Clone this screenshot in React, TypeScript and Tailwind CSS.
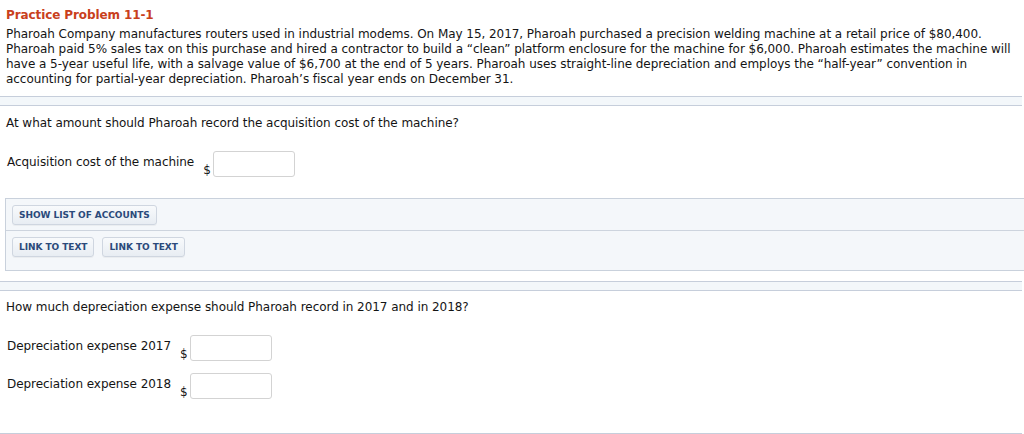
import React from "react";

function Btn({ children }: { children: React.ReactNode }) {
  return (
    <button className="h-[20px] px-[6px] rounded-[3px] border border-[#cfd6e0] bg-gradient-to-b from-[#f8fafc] to-[#e8edf3] text-[9px] font-bold text-[#2b4a7b] leading-[18px] shadow-[0_1px_0_rgba(0,0,0,0.04)]">
      {children}
    </button>
  );
}

function Row({ label, className = "" }: { label: string; className?: string }) {
  return (
    <div className={`flex items-start pl-[7px] ${className}`}>
      <span className="pt-[4px] pr-[9px] leading-[15px]">{label}</span>
      <span className="pt-[12px] leading-[15px] pr-[2px]">$</span>
      <div className="w-[82px] h-[26px] rounded-[3px] border border-[#d3d3d3] bg-white" />
    </div>
  );
}

function Band({ className = "" }: { className?: string }) {
  return <div className={`h-[10px] mr-[2px] border-y border-[#c6cedb] bg-[#f3f7fa] ${className}`} />;
}

export default function App() {
  return (
    <div className="w-[1024px] h-[434px] overflow-hidden bg-white text-[12px] tracking-[-0.05px] text-[#141414] font-['DejaVu_Sans','Verdana',sans-serif]">
      <div className="pl-[6px] pt-[7px]">
        <h1 className="text-[12px] leading-[16px] font-bold tracking-[-0.1px] text-[#c9401c]">Practice Problem 11-1</h1>
        <p className="mt-[4px] leading-[15px] whitespace-nowrap">
          Pharoah Company manufactures routers used in industrial modems. On May 15, 2017, Pharoah purchased a precision welding machine at a retail price of $80,400.
          <br />
          Pharoah paid 5% sales tax on this purchase and hired a contractor to build a “clean” platform enclosure for the machine for $6,000. Pharoah estimates the machine will
          <br />
          have a 5-year useful life, with a salvage value of $6,700 at the end of 5 years. Pharoah uses straight-line depreciation and employs the “half-year” convention in
          <br />
          accounting for partial-year depreciation. Pharoah’s fiscal year ends on December 31.
        </p>
      </div>

      <Band className="mt-[9px]" />

      <p className="mt-[10px] pl-[6px] leading-[15px]">At what amount should Pharoah record the acquisition cost of the machine?</p>

      <Row label="Acquisition cost of the machine" className="mt-[20px]" />

      <div className="mt-[20px] ml-[5px] border-y border-l border-[#c9d1dc] bg-[#f4f7fa]">
        <div className="px-[6px] pt-[6px] pb-[5px] border-b border-[#cdd4de]">
          <Btn>SHOW LIST OF ACCOUNTS</Btn>
        </div>
        <div className="flex gap-[8px] px-[6px] pt-[6px] pb-[13px]">
          <Btn>LINK TO TEXT</Btn>
          <Btn>LINK TO TEXT</Btn>
        </div>
      </div>

      <Band className="mt-[10px]" />

      <p className="mt-[9px] pl-[6px] leading-[15px]">How much depreciation expense should Pharoah record in 2017 and in 2018?</p>

      <Row label="Depreciation expense 2017" className="mt-[20px]" />
      <Row label="Depreciation expense 2018" className="mt-[11px]" />

      <div className="mt-[33px] mr-[2px] border-b border-[#c6cedb]" />
    </div>
  );
}
